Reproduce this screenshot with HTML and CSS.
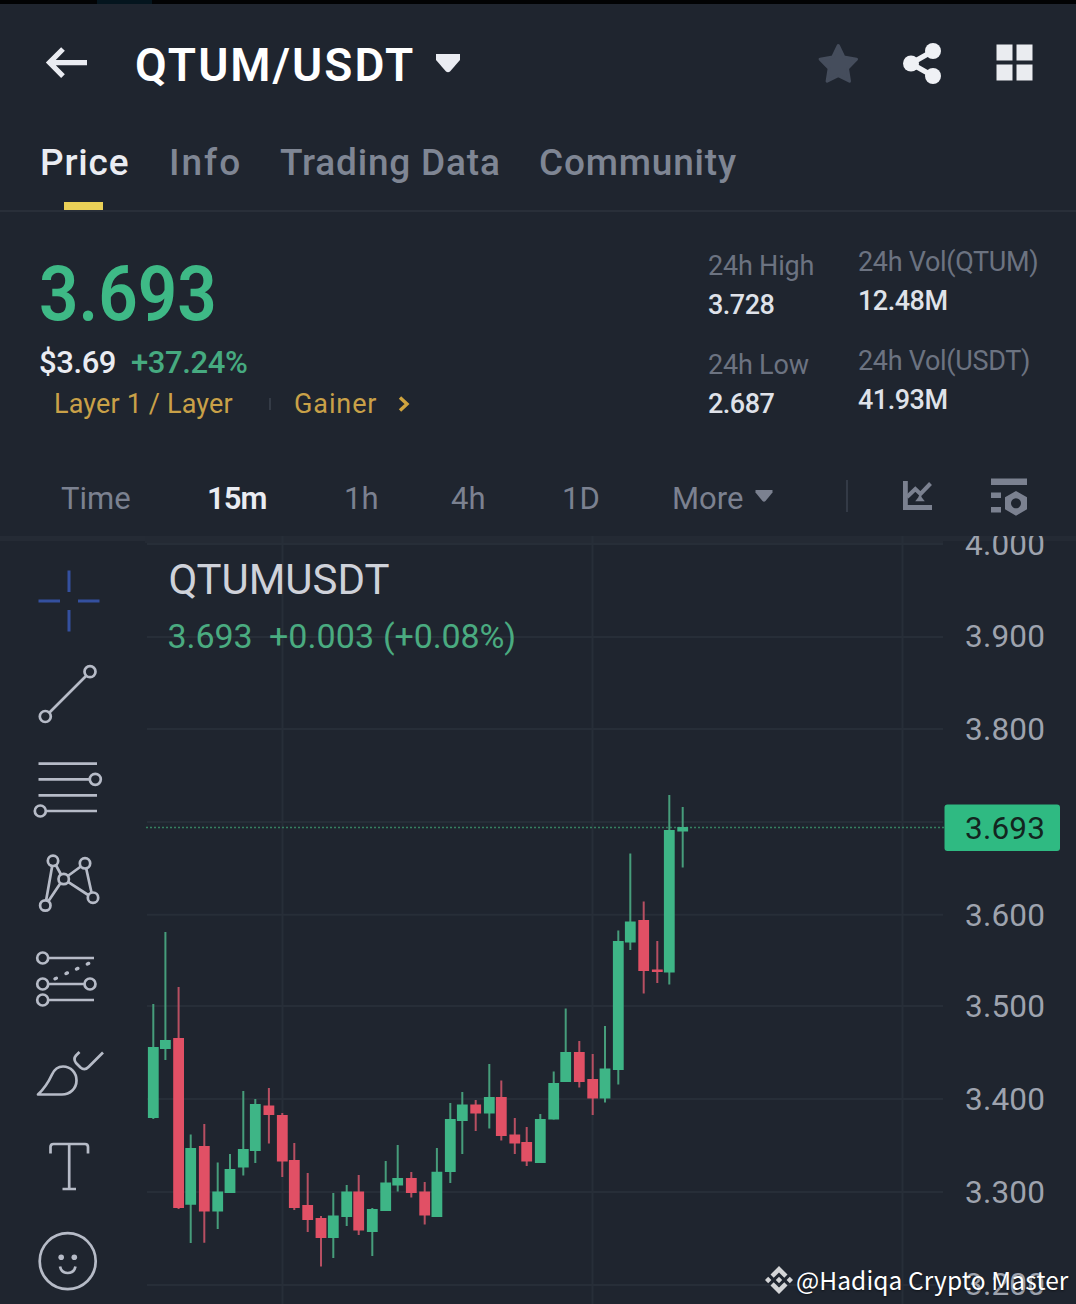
FILE: index.html
```html
<!DOCTYPE html>
<html lang="en">
<head>
<meta charset="utf-8">
<title>QTUM/USDT</title>
<link rel="stylesheet" href="styles.css">
</head>
<body>
<div class="app">
  <div class="status-strip"></div>
  <header class="header">
    <svg class="icon-back" viewBox="45 45 44 36" width="44" height="36"><path d="M87 62.600H50M63 49 49.500 62.600 63 76.200"/></svg>
    <h1 class="pair">QTUM/USDT</h1>
    <svg class="caret" viewBox="0 0 26 20" width="26" height="20"><path d="M1 1H25V7L15 18.500Q13 20 11 18.500L1 7Z"/></svg>
    <div class="header-actions">
      <svg viewBox="816 42 44 42" width="44" height="42"><path class="star" d="M838.300 45.500 843.800 57 856.500 59.200 847.500 68.500 849.500 81.200 838.300 75.700 827.100 81.200 829.100 68.500 820.100 59.200 832.800 57Z"/></svg>
      <svg viewBox="902 41 42 42" width="42" height="42"><g class="share"><path d="M933 50 911 62.500 933 75"/><circle cx="933" cy="50" r="8"/><circle cx="911" cy="62.500" r="8"/><circle cx="933" cy="75" r="8"/></g></svg>
      <svg viewBox="994 42 42 42" width="42" height="42"><path class="tiles" d="M996.500 44.500h16v16h-16zM1016.500 44.500h16v16h-16zM996.500 64.500h16v16h-16zM1016.500 64.500h16v16h-16z"/></svg>
    </div>
  </header>

  <nav class="tabs">
    <a class="tab tab-price active">Price</a>
    <a class="tab tab-info">Info</a>
    <a class="tab tab-data">Trading Data</a>
    <a class="tab tab-community">Community</a>
  </nav>

  <section class="summary">
    <div class="quote">
      <div class="last-price"><span>3.693</span></div>
      <div class="fiat"><span class="usd">$3.69</span><span class="change">+37.24%</span></div>
      <div class="tags">
        <span class="tag-layer">Layer 1 / Layer</span>
        <i class="tag-sep"></i>
        <span class="tag-gainer">Gainer</span>
        <svg class="chevron" viewBox="0 0 12 18" width="12" height="18"><path d="M2 2.500 9 9 2 15.500"/></svg>
      </div>
    </div>
    <dl class="stats">
      <dt>24h High</dt><dd>3.728</dd>
      <dt>24h Low</dt><dd>2.687</dd>
    </dl>
    <dl class="stats volumes">
      <dt>24h Vol(QTUM)</dt><dd>12.48M</dd>
      <dt>24h Vol(USDT)</dt><dd>41.93M</dd>
    </dl>
  </section>

  <nav class="intervals">
    <span class="int-time">Time</span>
    <span class="selected">15m</span>
    <span>1h</span>
    <span>4h</span>
    <span>1D</span>
    <span class="more">More<svg viewBox="0 0 18 14" width="18" height="14"><path d="M0.500 1H17.500V3.500L10.500 12Q9 13.500 7.500 12L0.500 3.500Z"/></svg></span>
    <i class="bar"></i>
    <svg viewBox="902 478 32 36" width="32" height="36"><path class="line" stroke-width="4.800" d="M905.400 481V507.500H932"/><path class="line" stroke-width="4" d="M907 497 915.300 489 920.500 494 930.500 483.500"/><path class="solid" d="M920 493l1.800 4.500 3 3.800h-9.600l3-3.800z"/></svg>
    <svg viewBox="990 476 38 40" width="38" height="40"><path class="solid" fill-rule="evenodd" d="M991 478.500h36v6.500h-36zM991 492.500h10v5.500h-10zM991 507h10v5.500h-10zM1016 491 1027 497.300V509.300L1016 515.800 1005 509.300V497.300ZM1016 498.300a5 5 0 1 0 .01 0Z"/></svg>
  </nav>

  <main class="workspace">
    <aside class="tools">
      <svg viewBox="0 554 145 94" height="94"><path class="cross" d="M69 570.500V592M69 610V631.500M38.500 601H60M78 601H99.500"/></svg>
      <svg viewBox="0 648 145 94" height="94"><path d="M49.500 712.500 86 676"/><circle cx="45.300" cy="716.500" r="5.500"/><circle cx="90" cy="671.700" r="5.500"/></svg>
      <svg viewBox="0 742 145 94" height="94"><path d="M38.500 763.700H97M38.500 779.300H90M38.500 795.300H97M46 811H97"/><circle cx="95.300" cy="779.300" r="5.500"/><circle cx="40.300" cy="811" r="5.500"/></svg>
      <svg viewBox="0 836 145 94" height="94"><path d="M52.200 866 46.200 900M55.800 865 61 874.500M60.600 883 48.500 901M67.800 876 80.800 866.500M86.200 868.500 91.500 892.500M68 881.800 88.200 895"/><circle cx="53" cy="860.800" r="5.200"/><circle cx="85" cy="863.300" r="5.200"/><circle cx="63.700" cy="879" r="5.200"/><circle cx="45.300" cy="905.500" r="5.200"/><circle cx="93" cy="897.700" r="5.200"/></svg>
      <svg viewBox="0 930 145 94" height="94"><path d="M48.500 958H94M48.500 984H84M48.500 1000H94"/><path class="dots" d="M55 978.800l1.400-.6M66 973.500l1.400-.6M76.500 969l1.400-.6M87.300 964l1.400-.6"/><circle cx="42.700" cy="958" r="5.500"/><circle cx="42.700" cy="984" r="5.500"/><circle cx="42.700" cy="1000" r="5.500"/><circle cx="90" cy="984" r="5.500"/></svg>
      <svg viewBox="0 1024 145 94" height="94"><path d="M38 1094.500C45 1088 49 1081 52 1074.500C54.500 1069 58 1066.500 63 1066.500C71 1066.500 76.500 1073 76.500 1080.500C76.500 1088.500 70 1094.500 62 1094.500ZM79.500 1052 76 1055.500Q73 1059 76 1063L80.500 1067.500Q84.500 1071 88.500 1067L103 1052.500"/></svg>
      <svg viewBox="0 1118 145 94" height="94"><path d="M50.500 1153.500V1147Q50.500 1144 53.500 1144H85Q88 1144 88 1147V1153.500M69.200 1144V1189M62.500 1189H76"/></svg>
      <svg viewBox="0 1212 145 92" height="92"><circle cx="67.700" cy="1261.200" r="28"/><path d="M60 1266.500Q61.500 1273 67.700 1273Q74 1273 75.500 1266.500"/><circle class="eye" cx="61.200" cy="1257.300" r="2.800"/><circle class="eye" cx="74.300" cy="1257.300" r="2.800"/></svg>
    </aside>

    <svg class="chart" viewBox="145 536 931 768" width="931" height="768">
      <rect class="top-band" x="145" y="536" width="798" height="7"/>
      <rect class="top-band" x="943" y="536" width="133" height="5"/>
      <path class="grid" d="M147 544H943M147 637H943M147 729H943M147 822H943M147 914.700H943M147 1006H943M147 1099H943M147 1192H943M147 1285H943M282.500 536V1304M592.500 536V1304M902.500 536V1304"/>
      <path class="last-line" d="M146 827.500H945"/>

      <path class="wick up" d="M153.300 1004V1119M165.400 932V1060M190.700 1134.500V1243M217.700 1162.500V1229M230 1154V1193M243.300 1091V1175.500M255.300 1099V1163M333.300 1193V1258M346.700 1185V1226M372.300 1208V1256M385.700 1161V1211M397.700 1145V1191.500M436.900 1148V1217M450.300 1103V1183M462.300 1092V1154M489.300 1064V1128.500M540.300 1114V1163M553.700 1071.500V1119.500M565.700 1008.500V1082M605 1026V1102.500M618.300 930.500V1084.500M630.300 853.500V950M669.300 795V984.500M682.700 807V867.500"/>
      <path class="wick down" d="M178.600 987V1209M204.300 1124V1242.700M268.900 1088V1143.500M282.300 1113V1177M294.300 1143V1210M307.700 1173V1232M321 1216V1266.500M358.700 1175V1235M411.300 1172V1197.500M424.700 1182V1224.500M475.700 1100V1131M501.300 1080.500V1140.500M514.800 1118V1154M526.700 1127V1166M579.300 1041V1087.500M592.700 1054V1115M643.700 901.500V993.500M657.300 941V983"/>
      <path class="body up" d="M153.300 1047V1118M165.400 1040V1049M190.700 1148V1204.700M217.700 1191.500V1211.500M230 1169V1193M243.300 1149V1167.500M255.300 1104V1151M333.300 1215.500V1238M346.700 1191.500V1217M372.300 1209V1232M385.700 1182.500V1211M397.700 1178V1185.500M436.900 1171.700V1217M450.300 1119V1172M462.300 1104.500V1121M489.300 1097V1113.500M540.300 1119V1163M553.700 1083V1119.500M565.700 1052V1082M605 1068.500V1098.500M618.300 941V1070M630.300 921.500V942.500M669.300 830V972.500M682.700 827V831.500"/>
      <path class="body down" d="M178.600 1038V1208M204.300 1146V1211.500M268.900 1105.500V1115M282.300 1115V1161.500M294.300 1160V1208M307.700 1205V1220M321 1218V1238M358.700 1191.500V1230.500M411.300 1178V1193M424.700 1191.500V1215.500M475.700 1104.500V1113.500M501.300 1097V1136M514.800 1134.500V1143.500M526.700 1142V1161.500M579.300 1052V1082M592.700 1079V1098.500M643.700 920V971M657.300 969.500V972"/>

      <text class="symbol" x="168.500" y="594" textLength="221">QTUMUSDT</text>
      <g class="delta">
        <text x="167.500" y="648" textLength="85">3.693</text>
        <text x="269" y="648" textLength="105">+0.003</text>
        <text x="383" y="648" textLength="133">(+0.08%)</text>
      </g>
      <g class="axis">
        <text x="965" y="555" textLength="80">4.000</text>
        <text x="965" y="646.500" textLength="80">3.900</text>
        <text x="965" y="739.500" textLength="80">3.800</text>
        <text x="965" y="925.500" textLength="80">3.600</text>
        <text x="965" y="1017" textLength="80">3.500</text>
        <text x="965" y="1110" textLength="80">3.400</text>
        <text x="965" y="1203" textLength="80">3.300</text>
        <text x="965" y="1295" textLength="80">3.200</text>
      </g>
      <rect class="price-tag" x="944.500" y="804.500" width="115.500" height="46.500" rx="3"/>
      <text class="price-tag-text" x="965" y="838.500" textLength="80">3.693</text>
    </svg>
  </main>

  <div class="watermark">
    <svg viewBox="0 0 28 28" width="28" height="28"><path d="M14 0 22.500 8.500 19.300 11.700 14 6.400 8.700 11.700 5.500 8.500ZM14 28 5.500 19.500 8.700 16.300 14 21.600 19.300 16.300 22.500 19.500ZM14 10.800 17.200 14 14 17.200 10.800 14ZM3.200 10.800 6.400 14 3.200 17.200 0 14ZM24.800 10.800 28 14 24.800 17.200 21.600 14Z"/></svg>
    <span>@Hadiqa Crypto Master</span>
  </div>
</div>
</body>
</html>
```
FILE: styles.css
```css
* { box-sizing: border-box; }
body { margin: 0; background: #1f252f; }
svg { display: block; flex: none; }

.app {
  position: relative;
  width: 1076px;
  height: 1304px;
  overflow: hidden;
  background: #1f252f;
  font-family: Roboto, "Liberation Sans", sans-serif;
  color: #eaecf2;
  white-space: nowrap;
}

.status-strip {
  height: 4px;
  background: linear-gradient(90deg, #020304 97px, #04151e 97px, #04151e 152px, #020304 152px);
}

/* Header */
.header {
  display: flex;
  align-items: center;
  height: 118px;
  padding: 0 40px 0 45px;
}
.icon-back path { fill: none; stroke: #eaecf2; stroke-width: 5.2; }
.pair {
  width: 281px;
  margin: 4px 0 0 46px;
  font-size: 46px;
  font-weight: 600;
  line-height: 56px;
  letter-spacing: 2px;
  color: #fff;
}
.caret { margin-left: 19px; fill: #eaecf2; }
.header-actions { display: flex; align-items: center; margin-left: auto; }
.header-actions svg + svg { margin-left: 42px; }
.header-actions svg:last-child { margin-left: 50px; }
.star { fill: #454d5c; stroke: #454d5c; stroke-width: 3; stroke-linejoin: round; }
.share { fill: #eff1f5; }
.share path { fill: none; stroke: #eff1f5; stroke-width: 5.4; }
.tiles { fill: #eaecf0; }

/* Tabs */
.tabs {
  display: grid;
  grid-template-columns: 129px 111px 259px 1fr;
  height: 90px;
  padding: 17px 0 0 40px;
  border-bottom: 2px solid #292f39;
}
.tab {
  display: flex;
  flex-direction: column;
  justify-content: space-between;
  font-size: 37px;
  font-weight: 500;
  line-height: 48px;
  letter-spacing: 0.8px;
  color: #7f8694;
}
.tab-info { letter-spacing: 2px; }
.active { color: #eaecf2; }
.active::after {
  content: "";
  width: 39px;
  height: 8px;
  margin: 0 0 0 24px;
  background: #ead057;
}

/* Price summary */
.summary {
  display: grid;
  grid-template-columns: 669px 150px 1fr;
  height: 248px;
  padding: 32px 0 0 39px;
}
.last-price {
  height: 99px;
  font-size: 76px;
  font-weight: 600;
  line-height: 100px;
  color: #3eb986;
}
.last-price span { display: inline-block; transform: scaleX(0.91); transform-origin: 0 50%; }
.fiat {
  display: flex;
  height: 41px;
  font-size: 31px;
  font-weight: 500;
  line-height: 40px;
}
.usd { width: 92px; letter-spacing: -0.4px; }
.change { color: #46aa80; letter-spacing: -0.4px; }
.tags {
  display: flex;
  align-items: center;
  height: 40px;
  padding-left: 15px;
  font-size: 27px;
  color: #c9a148;
}
.tag-layer { width: 215px; letter-spacing: 0.15px; }
.tag-sep { width: 2px; height: 12px; background: #343b46; }
.tag-gainer { width: 83px; margin-left: 23px; letter-spacing: 0.9px; }
.chevron { margin-left: 21px; fill: none; stroke: #d0a43e; stroke-width: 3.4; }

.stats { margin: 0; font-size: 27px; }
.stats dt { height: 39px; line-height: 44px; letter-spacing: -0.2px; color: #6c7381; }
.stats dd { height: 60px; margin: 0; line-height: 44px; font-weight: 500; letter-spacing: -0.5px; color: #dfe2e9; }
.volumes { margin-top: -4px; }
.volumes dt { letter-spacing: -0.3px; }

/* Chart interval bar */
.intervals {
  display: grid;
  grid-template-columns: 146px 137px 107px 111px 110px 174px 56px 88px 1fr;
  align-items: center;
  height: 76px;
  padding: 0 0 4px 61px;
  font-size: 31px;
  line-height: 40px;
  color: #7b8190;
}
.intervals span { padding-top: 5px; }
.selected { font-weight: 600; letter-spacing: -1px; color: #eaecf2; }
.more { display: flex; align-items: center; gap: 12px; }
.more svg { margin-top: -5px; }
.more path { fill: #7b8190; }
.bar { width: 2px; height: 32px; background: #333a46; }
.line { fill: none; stroke: #7b8190; }
.solid { fill: #7b8190; }

/* Workspace */
.workspace { display: flex; height: 768px; }
.tools {
  display: flex;
  flex-direction: column;
  width: 145px;
  padding-top: 13px;
  border-top: 5px solid #252b35;
}
.tools svg { width: 145px; fill: none; stroke: #b6bbc7; stroke-width: 2.7; stroke-linejoin: round; }
.tools .cross { stroke: #34509f; stroke-width: 3; }
.tools .dots { stroke-width: 3.4; stroke-linecap: round; }
.tools .eye { fill: #b6bbc7; stroke: none; }

.top-band { fill: #242a34; }
.grid { fill: none; stroke: #272e38; stroke-width: 2; }
.last-line { stroke: #35805f; stroke-width: 1.6; stroke-dasharray: 2 2; }
.wick { stroke-width: 2; fill: none; }
.body { stroke-width: 10.8; fill: none; }
.up { stroke: #3eb586; }
.down { stroke: #e15065; }
.wick.up { stroke: #469d7b; }
.wick.down { stroke: #b74f62; }
.symbol { font-size: 42px; fill: #cfd2da; }
.delta { font-size: 34px; fill: #4aab80; }
.axis { font-size: 31.5px; fill: #9ea3ae; }
.price-tag { fill: #2fba82; }
.price-tag-text { font-size: 31.5px; fill: #13251f; }

.watermark {
  position: absolute;
  left: 765px;
  top: 1260px;
  display: flex;
  align-items: center;
  gap: 3px;
  height: 40px;
  font-family: "Noto Sans CJK SC", sans-serif;
  font-size: 24.5px;
  line-height: 39px;
  letter-spacing: 0.1px;
  color: #fff;
}
.watermark svg { fill: #d4d5d7; }
.watermark span { margin-top: -2px; text-shadow: 0 1px 2px rgba(0, 0, 0, 0.5); }
```
